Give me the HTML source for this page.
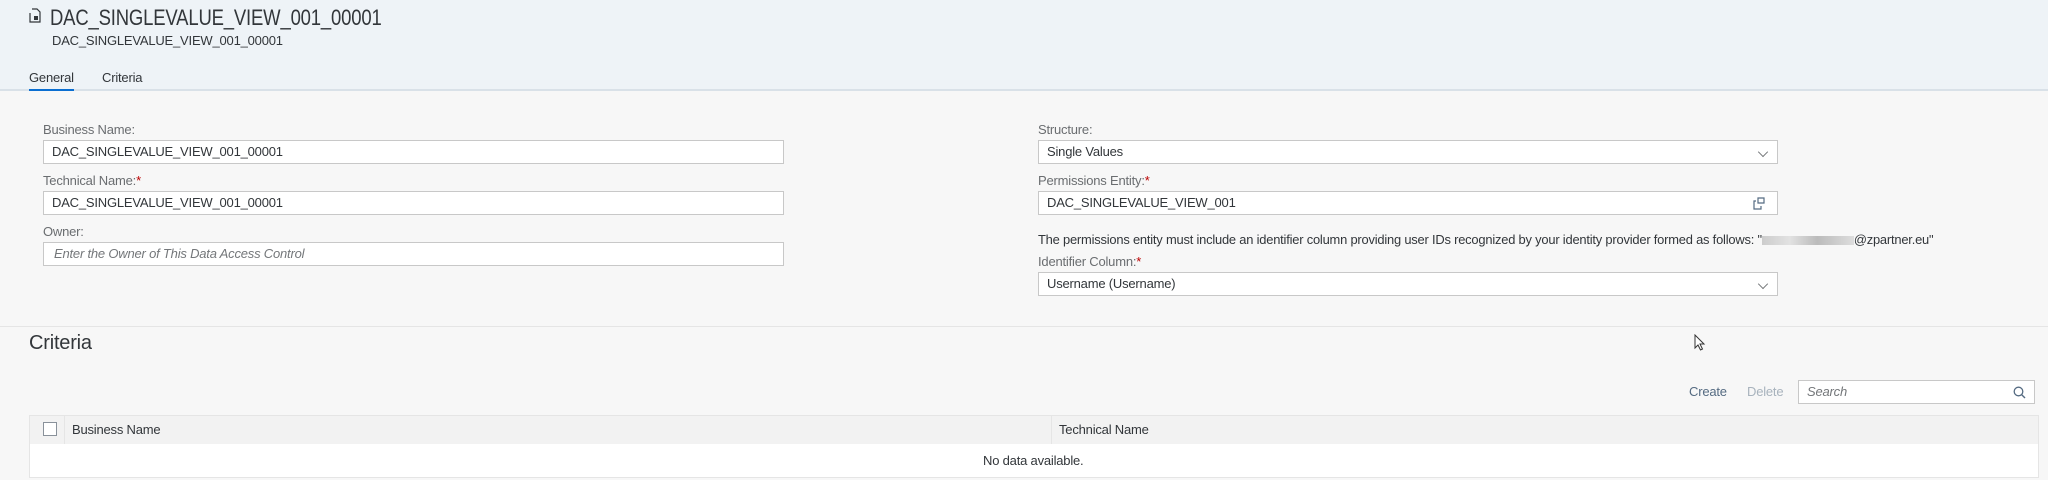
<!DOCTYPE html>
<html><head><meta charset="utf-8"><style>
*{box-sizing:border-box;margin:0;padding:0}
body{width:2048px;height:480px;background:#f7f7f7;font-family:"Liberation Sans",sans-serif;color:#32363a;position:relative;overflow:hidden;letter-spacing:-0.2px}
.a{position:absolute;white-space:nowrap}
.hdr{position:absolute;left:0;top:0;width:2048px;height:91px;background:#eef3f7;border-bottom:2px solid #d9e1e8}
.lbl{font-size:13px;color:#6a6d70}
.req{color:#bb0000}
.inp{position:absolute;height:24px;background:#fff;border:1px solid #c8c8c8;font-size:13px;line-height:22px;padding-left:8px;color:#32363a}
.ph{font-style:italic;color:#74777a}
.chev{position:absolute;right:10px;top:7px;width:8px;height:8px;border-right:1px solid #6a6d70;border-bottom:1px solid #6a6d70;transform:rotate(45deg) scale(0.9)}
</style></head><body>
<div class="hdr"></div>
<svg class="a" style="left:28px;top:8px" width="14" height="16" viewBox="0 0 14 16"><path d="M4 1h5l3 3v10H2V5" fill="none" stroke="#32363a" stroke-width="1.2"/><rect x="6" y="8" width="4" height="4" fill="#32363a"/></svg>
<div class="a" style="left:50px;top:5px;font-size:22px;color:#32363a;transform:scaleX(0.84);transform-origin:0 0">DAC_SINGLEVALUE_VIEW_001_00001</div>
<div class="a" style="left:52px;top:33px;font-size:13px">DAC_SINGLEVALUE_VIEW_001_00001</div>
<div class="a" style="left:29px;top:70px;font-size:13px">General</div>
<div class="a" style="left:29px;top:89px;width:45px;height:2px;background:#0a6ed1;z-index:2"></div>
<div class="a" style="left:102px;top:70px;font-size:13px">Criteria</div>

<div class="a lbl" style="left:43px;top:122px">Business Name:</div>
<div class="inp" style="left:43px;top:140px;width:741px">DAC_SINGLEVALUE_VIEW_001_00001</div>
<div class="a lbl" style="left:43px;top:173px">Technical Name:<span class="req">*</span></div>
<div class="inp" style="left:43px;top:191px;width:741px">DAC_SINGLEVALUE_VIEW_001_00001</div>
<div class="a lbl" style="left:43px;top:224px">Owner:</div>
<div class="inp ph" style="left:43px;top:242px;width:741px;padding-left:10px">Enter the Owner of This Data Access Control</div>

<div class="a lbl" style="left:1038px;top:122px">Structure:</div>
<div class="inp" style="left:1038px;top:140px;width:740px">Single Values<div class="chev"></div></div>
<div class="a lbl" style="left:1038px;top:173px">Permissions Entity:<span class="req">*</span></div>
<div class="inp" style="left:1038px;top:191px;width:740px">DAC_SINGLEVALUE_VIEW_001
<svg style="position:absolute;right:10px;top:5px" width="14" height="13" viewBox="0 0 14 13"><path d="M5 1h6v5H5z M3 4H1v8h7V9" fill="none" stroke="#556b82" stroke-width="1.2"/></svg></div>
<div class="a" style="left:1038px;top:232px;font-size:12.9px">The permissions entity must include an identifier column providing user IDs recognized by your identity provider formed as follows: "<span style="display:inline-block;width:92px;height:9px;background:linear-gradient(90deg,#ccc,#e2e2e2 30%,#bbb 60%,#ddd);vertical-align:middle"></span>@zpartner.eu"</div>
<div class="a lbl" style="left:1038px;top:254px">Identifier Column:<span class="req">*</span></div>
<div class="inp" style="left:1038px;top:272px;width:740px">Username (Username)<div class="chev"></div></div>

<div class="a" style="left:0;top:326px;width:2048px;height:1px;background:#e5e5e5"></div>
<div class="a" style="left:29px;top:332px;font-size:20px">Criteria</div>
<svg class="a" style="left:1694px;top:334px" width="12" height="18" viewBox="0 0 12 18"><path d="M1 1v13l3-3 2.5 5 2-1-2.5-5h4z" fill="#fff" stroke="#333" stroke-width="1"/></svg>
<div class="a" style="left:1689px;top:384px;font-size:13px;color:#556b82">Create</div>
<div class="a" style="left:1747px;top:384px;font-size:13px;color:#a8b3bd">Delete</div>
<div class="inp ph" style="left:1798px;top:380px;width:237px;height:24px;line-height:22px;padding-left:8px">Search
<svg style="position:absolute;right:8px;top:5px" width="13" height="13" viewBox="0 0 13 13"><circle cx="5.5" cy="5.5" r="4.3" fill="none" stroke="#556b82" stroke-width="1.3"/><path d="M8.6 8.6L12 12" stroke="#556b82" stroke-width="1.4"/></svg></div>

<div class="a" style="left:29px;top:415px;width:2010px;height:63px;border:1px solid #e5e5e5;background:#fff"></div>
<div class="a" style="left:30px;top:416px;width:2008px;height:28px;background:#f2f2f2"></div>
<div class="a" style="left:43px;top:422px;width:14px;height:14px;border:1px solid #89919a;background:#fff"></div>
<div class="a" style="left:64px;top:416px;width:1px;height:28px;background:#e5e5e5"></div>
<div class="a" style="left:72px;top:422px;font-size:13px">Business Name</div>
<div class="a" style="left:1051px;top:416px;width:1px;height:28px;background:#e5e5e5"></div>
<div class="a" style="left:1059px;top:422px;font-size:13px">Technical Name</div>
<div class="a" style="left:983px;top:453px;font-size:13px">No data available.</div>
</body></html>
